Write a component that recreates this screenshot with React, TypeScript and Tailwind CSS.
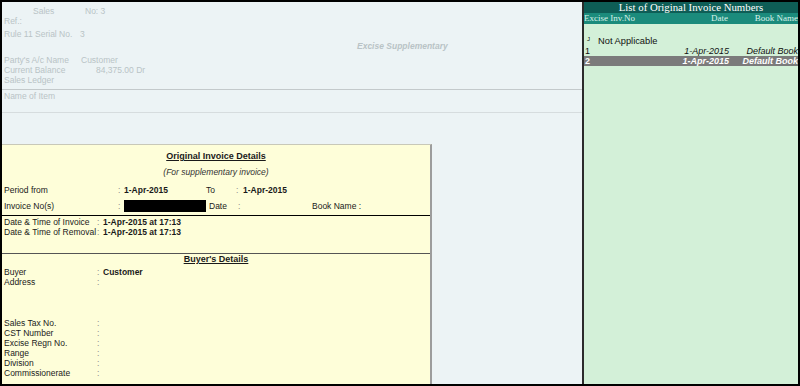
const faded = 'text-[#b9c3c6]';

function FadedForm() {
    return (
        <div className={`h-[142px] flex flex-col pt-[5px] ${faded}`}>
            <div className="flex h-[9px] leading-[9px]">
                <span className="ml-[31px] w-[52px]">Sales</span>
                <span>No: 3</span>
            </div>
            <div className="h-[10px] pl-[2px]">Ref.:</div>
            <div className="flex h-[10px] mt-[3px] pl-[2px]">
                <span className="w-[76px]">Rule 11 Serial No.</span>
                <span>3</span>
            </div>
            <div className="h-[10px] mt-[2px] pl-[355px] italic font-bold">Excise Supplementary</div>
            <div className="flex h-[10px] mt-[4px] pl-[2px]">
                <span className="w-[77px]">Party's A/c Name</span>
                <span>Customer</span>
            </div>
            <div className="flex h-[10px] pl-[2px]">
                <span className="w-[92px]">Current Balance</span>
                <span>84,375.00 Dr</span>
            </div>
            <div className="h-[10px] pl-[2px]">Sales Ledger</div>
            <div className="mt-[4px] border-t border-[#c3c9cb]" />
            <div className="h-[10px] mt-[1px] pl-[2px]">Name of Item</div>
            <div className="mt-[11px] border-t border-[#d6dcde]" />
        </div>
    );
}

function Row({ label, value, bold = true }: { label: string; value?: string; bold?: boolean }) {
    return (
        <div className="flex h-[10px] pl-[2px]">
            <span className="w-[93px] shrink-0">{label}</span>
            <span className="w-[6px] shrink-0 text-[#888]">:</span>
            {value && <span className={bold ? 'font-bold' : ''}>{value}</span>}
        </div>
    );
}

function InvoiceDetails() {
    return (
        <div className="w-[430px] flex-1 bg-[#fefed9] border-t border-[#c8c8b8] border-r-2 border-r-[#9c9c9c] flex flex-col">
            <div className="h-[10px] mt-[6px] text-center font-bold underline text-[9px]">Original Invoice Details</div>
            <div className="h-[10px] mt-[6px] text-center italic text-[#333]">(For supplementary invoice)</div>
            <div className="flex h-[10px] mt-[8px] pl-[2px]">
                <span className="w-[114px]">Period from</span>
                <span className="w-[6px] text-[#888]">:</span>
                <span className="w-[82px] font-bold">1-Apr-2015</span>
                <span className="w-[30px]">To</span>
                <span className="w-[7px] text-[#888]">:</span>
                <span className="font-bold">1-Apr-2015</span>
            </div>
            <div className="flex items-center h-[12px] mt-[5px] pl-[2px]">
                <span className="w-[114px]">Invoice No(s)</span>
                <span className="w-[6px] text-[#888]">:</span>
                <span className="w-[82px] h-[12px] bg-black" />
                <span className="w-[29px] ml-[3px]">Date</span>
                <span className="w-[74px] text-[#888]">:</span>
                <span>Book Name :</span>
            </div>
            <div className="mt-[3px] border-t border-black" />
            <div className="mt-[1px]">
                <Row label="Date & Time of Invoice" value="1-Apr-2015 at 17:13" />
                <Row label="Date & Time of Removal" value="1-Apr-2015 at 17:13" />
            </div>
            <div className="mt-[16px] border-t border-[#555]" />
            <div className="h-[10px] text-center font-bold underline text-[9px]">Buyer's Details</div>
            <div className="mt-[3px]">
                <Row label="Buyer" value="Customer" />
                <Row label="Address" />
            </div>
            <div className="mt-[31px]">
                <Row label="Sales Tax No." />
                <Row label="CST Number" />
                <Row label="Excise Regn No." />
                <Row label="Range" />
                <Row label="Division" />
                <Row label="Commissionerate" />
            </div>
        </div>
    );
}

function InvoiceList() {
    return (
        <div className="w-[216px] border-l-2 border-[#2b2b2b] bg-[#d3f0d8] flex flex-col">
            <div className="h-[11px] bg-[#0e5d56] text-white text-center font-['Liberation_Serif',serif] text-[10.8px] leading-[11px]">
                List of Original Invoice Numbers
            </div>
            <div className="flex h-[11px] bg-[#1b8b7c] text-[#d9f2ea] font-['Liberation_Serif',serif] text-[9px] leading-[11px]">
                <span className="flex-1">Excise Inv.No</span>
                <span className="w-[60px] text-right pr-[1px]">Date</span>
                <span className="w-[69px] text-right">Book Name</span>
            </div>
            <div className="flex h-[10px] mt-[12px] text-[9.3px] leading-[10px] text-[#111]">
                <span className="w-[14px] pl-[3px] text-[6px] leading-[6px]">J</span>
                <span>Not Applicable</span>
            </div>
            <div className="flex h-[10px] text-[9px] leading-[10px] text-[#111]">
                <span className="flex-1 pl-[1px]">1</span>
                <span className="w-[60px] text-right italic">1-Apr-2015</span>
                <span className="w-[69px] text-right italic">Default Book</span>
            </div>
            <div className="flex h-[10px] bg-[#7b7b7b] text-[9px] leading-[10px] text-white font-bold italic">
                <span className="flex-1 pl-[1px] not-italic">2</span>
                <span className="w-[60px] text-right">1-Apr-2015</span>
                <span className="w-[69px] text-right">Default Book</span>
            </div>
        </div>
    );
}

export default function App() {
    return (
        <div className="w-[800px] h-[386px] border-2 border-black flex bg-[#ecf3f5] font-['Liberation_Sans',Arial,sans-serif] text-[8.5px] leading-[10px] text-[#1a1a1a] whitespace-nowrap overflow-hidden">
            <div className="w-[580px] flex flex-col">
                <FadedForm />
                <InvoiceDetails />
            </div>
            <InvoiceList />
        </div>
    );
}
